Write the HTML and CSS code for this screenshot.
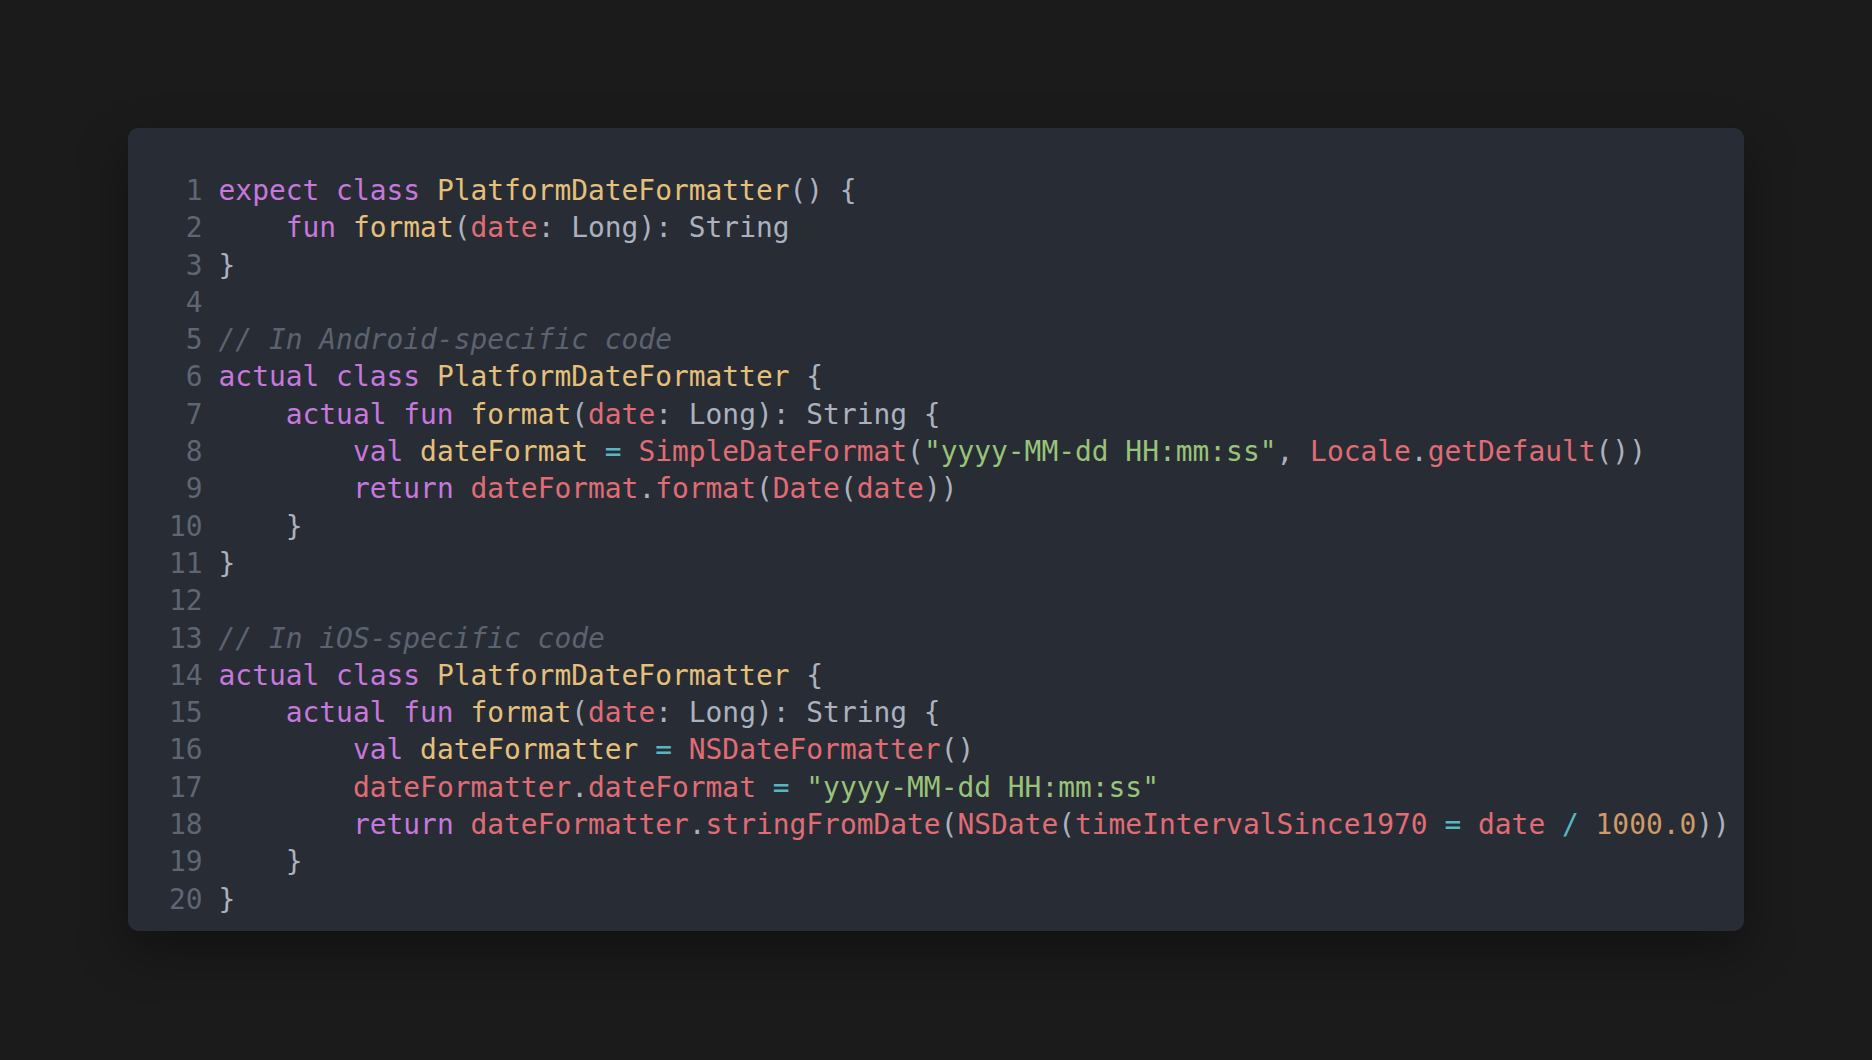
FILE: index.html
```html
<!DOCTYPE html>
<html lang="en">
<head>
  <meta charset="UTF-8">
  <title>PlatformDateFormatter</title>
  <link rel="stylesheet" href="styles.css">
</head>
<body>
  <!-- Code snippet card -->
  <div class="code-card">
    <div class="line"><span class="ln">1</span><span class="code"><span class="kw">expect class</span> <span class="ty">PlatformDateFormatter</span>() {</span></div>
    <div class="line"><span class="ln">2</span><span class="code">    <span class="kw">fun</span> <span class="ty">format</span>(<span class="var">date</span>: Long): String</span></div>
    <div class="line"><span class="ln">3</span><span class="code">}</span></div>
    <div class="line"><span class="ln">4</span><span class="code"></span></div>
    <div class="line"><span class="ln">5</span><span class="code"><span class="cm">// In Android-specific code</span></span></div>
    <div class="line"><span class="ln">6</span><span class="code"><span class="kw">actual class</span> <span class="ty">PlatformDateFormatter</span> {</span></div>
    <div class="line"><span class="ln">7</span><span class="code">    <span class="kw">actual fun</span> <span class="ty">format</span>(<span class="var">date</span>: Long): String {</span></div>
    <div class="line"><span class="ln">8</span><span class="code">        <span class="kw">val</span> <span class="ty">dateFormat</span> <span class="op">=</span> <span class="var">SimpleDateFormat</span>(<span class="str">"yyyy-MM-dd HH:mm:ss"</span>, <span class="var">Locale</span>.<span class="var">getDefault</span>())</span></div>
    <div class="line"><span class="ln">9</span><span class="code">        <span class="kw">return</span> <span class="var">dateFormat</span>.<span class="var">format</span>(<span class="var">Date</span>(<span class="var">date</span>))</span></div>
    <div class="line"><span class="ln">10</span><span class="code">    }</span></div>
    <div class="line"><span class="ln">11</span><span class="code">}</span></div>
    <div class="line"><span class="ln">12</span><span class="code"></span></div>
    <div class="line"><span class="ln">13</span><span class="code"><span class="cm">// In iOS-specific code</span></span></div>
    <div class="line"><span class="ln">14</span><span class="code"><span class="kw">actual class</span> <span class="ty">PlatformDateFormatter</span> {</span></div>
    <div class="line"><span class="ln">15</span><span class="code">    <span class="kw">actual fun</span> <span class="ty">format</span>(<span class="var">date</span>: Long): String {</span></div>
    <div class="line"><span class="ln">16</span><span class="code">        <span class="kw">val</span> <span class="ty">dateFormatter</span> <span class="op">=</span> <span class="var">NSDateFormatter</span>()</span></div>
    <div class="line"><span class="ln">17</span><span class="code">        <span class="var">dateFormatter</span>.<span class="var">dateFormat</span> <span class="op">=</span> <span class="str">"yyyy-MM-dd HH:mm:ss"</span></span></div>
    <div class="line"><span class="ln">18</span><span class="code">        <span class="kw">return</span> <span class="var">dateFormatter</span>.<span class="var">stringFromDate</span>(<span class="var">NSDate</span>(<span class="var">timeIntervalSince1970</span> <span class="op">=</span> <span class="var">date</span> <span class="op">/</span> <span class="num">1000.0</span>))</span></div>
    <div class="line"><span class="ln">19</span><span class="code">    }</span></div>
    <div class="line"><span class="ln">20</span><span class="code">}</span></div>
  </div>
</body>
</html>
```
FILE: styles.css
```css
/* Reset */
* {
  margin: 0;
  padding: 0;
  box-sizing: border-box;
}

body {
  background-color: #1b1b1b;
  min-height: 100vh;
  padding: 128px;
  font-family: "DejaVu Sans Mono", "Liberation Mono", monospace;
}

/* Card with code */
.code-card {
  background-color: #282c34;
  border-radius: 10px;
  padding: 44px 40px 13px 41px;
  box-shadow: 0 20px 50px rgba(0, 0, 0, 0.35);
  font-size: 27.9px;
  line-height: 37.3px;
  color: #abb2bf;
}

.line {
  display: flex;
  white-space: pre;
}

.ln {
  width: 2ch;
  text-align: right;
  margin-right: 16px;
  color: #5f6673;
  flex-shrink: 0;
}

/* Syntax colours */
.kw  { color: #c678dd; }
.ty  { color: #e5c07b; }
.var { color: #e06c75; }
.str { color: #98c379; }
.op  { color: #56b6c2; }
.num { color: #d19a66; }
.cm  { color: #5c6370; font-style: italic; }
```
